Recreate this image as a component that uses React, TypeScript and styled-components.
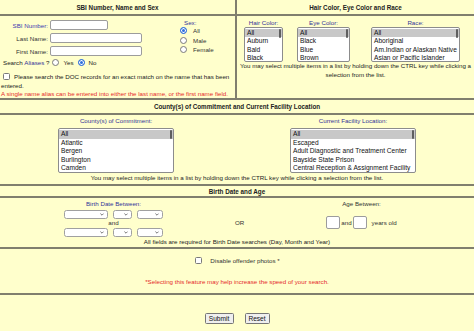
import React from 'react'
import styled, { createGlobalStyle } from 'styled-components'

const LINE = '#807f6e'
const NAVY = '#333399'

const GlobalStyle = createGlobalStyle`
  html, body {
    margin: 0;
    padding: 0;
    background: #ffffcc;
  }
  body {
    font-family: "Liberation Sans", Arial, sans-serif;
    font-size: 6.2px;
    color: #222;
  }
`

const Page = styled.div`
  width: 474px;
  height: 331px;
  overflow: hidden;
  background: #ffffcc;
`

const TopGrid = styled.div`
  display: grid;
  grid-template-columns: 237px 1fr;
  height: 100px;
  box-sizing: border-box;
  border-bottom: 2px solid ${LINE};
`

const LeftCol = styled.div`
  border-right: 2px solid ${LINE};
`

const RightCol = styled.div``

const CellHeader = styled.div`
  height: 16px;
  box-sizing: border-box;
  border-bottom: 2px solid ${LINE};
  display: flex;
  align-items: center;
  justify-content: center;
  font-weight: bold;
  font-size: 6.3px;
  color: #222;
`

const SectionHeader = styled.div<{ $h: number }>`
  height: ${(p) => p.$h}px;
  box-sizing: border-box;
  border-bottom: 2px solid ${LINE};
  display: flex;
  align-items: center;
  justify-content: center;
  font-weight: bold;
  font-size: 6.3px;
  color: #222;
`

const Section = styled.div<{ $h: number }>`
  height: ${(p) => p.$h}px;
  box-sizing: border-box;
  border-bottom: 2px solid ${LINE};
`

const NameArea = styled.div`
  display: flex;
  align-items: flex-start;
  padding-top: 3px;
`

const Fields = styled.div`
  width: 180px;
  padding-top: 1px;
`

const FieldRow = styled.div`
  display: flex;
  align-items: center;
  height: 10px;
  margin-bottom: 3px;
  &:last-child {
    margin-bottom: 0;
  }
`

const FieldLabel = styled.span<{ $blue?: boolean }>`
  width: 48px;
  margin-right: 2px;
  text-align: right;
  color: ${(p) => (p.$blue ? '#3a3ab0' : '#333')};
  white-space: nowrap;
`

const TextInput = styled.input<{ $w: number }>`
  width: ${(p) => p.$w}px;
  height: 10px;
  box-sizing: border-box;
  border: 1px solid #9c9c9c;
  border-radius: 2px;
  background: #fff;
  padding: 0;
  margin: 0;
  outline: none;
`

const SexCol = styled.div`
  display: flex;
  flex-direction: column;
`

const SexLabel = styled.div`
  height: 7px;
  line-height: 7px;
  margin-left: 4px;
  color: ${NAVY};
`

const RadioRow = styled.label`
  display: flex;
  align-items: center;
  height: 9.5px;
  color: #333;
`

const Radio = styled.span<{ $checked?: boolean }>`
  display: inline-block;
  width: 7px;
  height: 7px;
  box-sizing: border-box;
  border-radius: 50%;
  border: 1px solid ${(p) => (p.$checked ? '#2f6fdc' : '#7a7a7a')};
  background: ${(p) => (p.$checked ? '#2f6fdc' : '#fff')};
  box-shadow: ${(p) => (p.$checked ? 'inset 0 0 0 1px #fff' : 'none')};
  flex: none;
`

const RadioText = styled.span<{ $gap: number }>`
  margin-left: ${(p) => p.$gap}px;
  margin-right: 4px;
`

const AliasRow = styled.div`
  display: flex;
  align-items: center;
  height: 8px;
  margin-top: 2px;
  padding-left: 3px;
  color: #222;
`

const AliasWord = styled.span`
  color: ${NAVY};
`

const AliasChoices = styled.span`
  display: flex;
  align-items: center;
  margin-left: 3px;
`

const ExactPara = styled.div`
  margin-top: 7px;
  padding-left: 1px;
  line-height: 8.5px;
  color: #222;
`

const CheckBox = styled.span`
  display: inline-block;
  width: 7px;
  height: 7px;
  box-sizing: border-box;
  border: 1px solid #7a7a7a;
  border-radius: 1.5px;
  background: #fff;
  vertical-align: -1px;
  flex: none;
`

const InlineCheck = styled(CheckBox)`
  margin-left: 2px;
  margin-right: 4px;
`

const RedNote = styled.div<{ $center?: boolean }>`
  color: #e52b2b;
  line-height: 8.5px;
  padding-left: ${(p) => (p.$center ? 0 : 1)}px;
  text-align: ${(p) => (p.$center ? 'center' : 'left')};
  white-space: nowrap;
`

const ListGroup = styled.div`
  display: flex;
  align-items: flex-start;
  padding-top: 3px;
  padding-left: 7px;
`

const ListField = styled.div<{ $ml: number }>`
  display: flex;
  flex-direction: column;
  align-items: center;
  margin-left: ${(p) => p.$ml}px;
`

const ListLabel = styled.div`
  height: 7px;
  line-height: 7px;
  margin-bottom: 1px;
  color: ${NAVY};
  white-space: nowrap;
`

const ListBox = styled.div<{ $w: number; $h: number }>`
  position: relative;
  width: ${(p) => p.$w}px;
  height: ${(p) => p.$h}px;
  box-sizing: border-box;
  border: 1px solid #8c8c8c;
  border-radius: 2px;
  background: #fff;
  overflow: hidden;
  padding-top: 1px;
`

const Option = styled.div<{ $selected?: boolean; $h: number }>`
  height: ${(p) => p.$h}px;
  line-height: ${(p) => p.$h}px;
  padding-left: 2px;
  background: ${(p) => (p.$selected ? '#c8c8c8' : 'transparent')};
  white-space: nowrap;
  font-size: 6.6px;
  color: #111;
`

const Thumb = styled.span`
  position: absolute;
  right: 1px;
  top: 1px;
  width: 2.5px;
  height: 9px;
  border-radius: 1.5px;
  background: #5f5f5f;
`

const Note = styled.div`
  text-align: center;
  line-height: 8.5px;
  color: #222;
`

const CountyGrid = styled.div`
  display: grid;
  grid-template-columns: 232px 1fr;
  padding-top: 2px;
`

const CountyField = styled.div`
  display: flex;
  flex-direction: column;
  align-items: center;
`

const CountyLabel = styled.div`
  height: 8px;
  line-height: 8px;
  margin-bottom: 3px;
  color: ${NAVY};
`

const CountyNote = styled(Note)`
  margin-top: 1px;
  line-height: 8px;
`

const BirthGrid = styled.div`
  display: grid;
  grid-template-columns: 227px 22px 1fr;
  padding-top: 2px;
`

const BirthCol = styled.div`
  display: flex;
  flex-direction: column;
  align-items: center;
`

const SmallLabel = styled.div<{ $navy?: boolean }>`
  height: 8px;
  line-height: 8px;
  color: ${(p) => (p.$navy ? NAVY : '#333')};
`

const SelectRow = styled.div<{ $mt: number }>`
  display: flex;
  gap: 5px;
  margin-top: ${(p) => p.$mt}px;
`

const DateSelect = styled.div<{ $w: number }>`
  width: ${(p) => p.$w}px;
  height: 9px;
  box-sizing: border-box;
  border: 1px solid #a0a0a0;
  border-radius: 2.5px;
  background: #fff;
  display: flex;
  align-items: center;
  justify-content: flex-end;
  padding-right: 3px;
`

const AndText = styled.div`
  height: 8px;
  line-height: 8px;
  color: #333;
`

const OrCol = styled.div`
  padding-top: 19px;
  padding-left: 8px;
  line-height: 8px;
  color: #333;
`

const AgeRow = styled.div`
  display: flex;
  align-items: center;
  margin-top: 8px;
  color: #333;
`

const AgeInput = styled.input`
  width: 14px;
  height: 13px;
  box-sizing: border-box;
  border: 1px solid #9c9c9c;
  border-radius: 2px;
  background: #fff;
  padding: 0;
  margin: 0;
`

const AgeWord = styled.span<{ $l: number; $r: number }>`
  margin-left: ${(p) => p.$l}px;
  margin-right: ${(p) => p.$r}px;
`

const BirthNote = styled(Note)`
  margin-top: 1px;
  line-height: 8px;
`

const PhotoRow = styled.div`
  display: flex;
  align-items: center;
  justify-content: center;
  height: 8px;
  margin-top: 7px;
  padding-left: 1px;
  color: #333;
`

const PhotoText = styled.span`
  margin-left: 8px;
`

const PhotoNote = styled(RedNote)`
  margin-top: 14px;
  line-height: 8px;
`

const ButtonRow = styled.div`
  display: flex;
  justify-content: center;
  gap: 11px;
  padding-top: 18px;
`

const FormButton = styled.button<{ $w: number }>`
  width: ${(p) => p.$w}px;
  height: 11px;
  box-sizing: border-box;
  padding: 0;
  margin: 0;
  font-family: "Liberation Sans", Arial, sans-serif;
  font-size: 6.6px;
  color: #111;
  background: #efefef;
  border: 1px solid #767676;
  border-radius: 1.5px;
`

function Chevron() {
  return (
    <svg width="4" height="3" viewBox="0 0 4 3">
      <path d="M0.4 0.6 L2 2.2 L3.6 0.6" fill="none" stroke="#555" strokeWidth="0.8" />
    </svg>
  )
}

type ListProps = {
  items: string[]
  w: number
  h: number
  rowH: number
}

function List(props: ListProps) {
  return (
    <ListBox $w={props.w} $h={props.h}>
      {props.items.map((item, i) => (
        <Option key={item} $selected={i === 0} $h={props.rowH}>
          {item}
        </Option>
      ))}
      <Thumb />
    </ListBox>
  )
}

function DateSelects({ mt }: { mt: number }) {
  return (
    <SelectRow $mt={mt}>
      <DateSelect $w={44}><Chevron /></DateSelect>
      <DateSelect $w={19}><Chevron /></DateSelect>
      <DateSelect $w={26}><Chevron /></DateSelect>
    </SelectRow>
  )
}

export default function App() {
  return (
    <Page>
      <GlobalStyle />
      <TopGrid>
        <LeftCol>
          <CellHeader>SBI Number, Name and Sex</CellHeader>
          <NameArea>
            <Fields>
              <FieldRow>
                <FieldLabel $blue>SBI Number:</FieldLabel>
                <TextInput $w={58} />
              </FieldRow>
              <FieldRow>
                <FieldLabel>Last Name:</FieldLabel>
                <TextInput $w={92} />
              </FieldRow>
              <FieldRow>
                <FieldLabel>First Name:</FieldLabel>
                <TextInput $w={92} />
              </FieldRow>
            </Fields>
            <SexCol>
              <SexLabel>Sex:</SexLabel>
              <RadioRow>
                <Radio $checked />
                <RadioText $gap={6}>All</RadioText>
              </RadioRow>
              <RadioRow>
                <Radio />
                <RadioText $gap={6}>Male</RadioText>
              </RadioRow>
              <RadioRow>
                <Radio />
                <RadioText $gap={6}>Female</RadioText>
              </RadioRow>
            </SexCol>
          </NameArea>
          <AliasRow>
            Search&nbsp;<AliasWord>Aliases</AliasWord>&nbsp;?
            <AliasChoices>
              <Radio />
              <RadioText $gap={4}>Yes</RadioText>
              <Radio $checked />
              <RadioText $gap={4}>No</RadioText>
            </AliasChoices>
          </AliasRow>
          <ExactPara>
            <InlineCheck />
            Please search the DOC records for an exact match on the name that has been entered.
          </ExactPara>
          <RedNote>A single name alias can be entered into either the last name, or the first name field.</RedNote>
        </LeftCol>
        <RightCol>
          <CellHeader>Hair Color, Eye Color and Race</CellHeader>
          <ListGroup>
            <ListField $ml={0}>
              <ListLabel>Hair Color:</ListLabel>
              <List items={['All', 'Auburn', 'Bald', 'Black']} w={39} h={35} rowH={8.4} />
            </ListField>
            <ListField $ml={14}>
              <ListLabel>Eye Color:</ListLabel>
              <List items={['All', 'Black', 'Blue', 'Brown']} w={53} h={35} rowH={8.4} />
            </ListField>
            <ListField $ml={21}>
              <ListLabel>Race:</ListLabel>
              <List
                items={['All', 'Aboriginal', 'Am.Indian or Alaskan Native', 'Asian or Pacific Islander']}
                w={89}
                h={35}
                rowH={8.4}
              />
            </ListField>
          </ListGroup>
          <Note>
            You may select multiple items in a list by holding down the CTRL key while clicking a
            <br />
            selection from the list.
          </Note>
        </RightCol>
      </TopGrid>

      <Section $h={86}>
        <SectionHeader $h={15}>County(s) of Commitment and Current Facility Location</SectionHeader>
        <CountyGrid>
          <CountyField>
            <CountyLabel>County(s) of Commitment:</CountyLabel>
            <List items={['All', 'Atlantic', 'Bergen', 'Burlington', 'Camden']} w={116} h={45} rowH={8.6} />
          </CountyField>
          <CountyField>
            <CountyLabel>Current Facility Location:</CountyLabel>
            <List
              items={[
                'All',
                'Escaped',
                'Adult Diagnostic and Treatment Center',
                'Bayside State Prison',
                'Central Reception & Assignment Facility',
              ]}
              w={126}
              h={45}
              rowH={8.6}
            />
          </CountyField>
        </CountyGrid>
        <CountyNote>
          You may select multiple items in a list by holding down the CTRL key while clicking a selection from the list.
        </CountyNote>
      </Section>

      <Section $h={63}>
        <SectionHeader $h={12}>Birth Date and Age</SectionHeader>
        <BirthGrid>
          <BirthCol>
            <SmallLabel $navy>Birth Date Between:</SmallLabel>
            <DateSelects mt={2} />
            <AndText>and</AndText>
            <DateSelects mt={1} />
          </BirthCol>
          <OrCol>OR</OrCol>
          <BirthCol>
            <SmallLabel>Age Between:</SmallLabel>
            <AgeRow>
              <AgeInput />
              <AgeWord $l={1} $r={1}>and</AgeWord>
              <AgeInput />
              <AgeWord $l={5} $r={0}>years old</AgeWord>
            </AgeRow>
          </BirthCol>
        </BirthGrid>
        <BirthNote>All fields are required for Birth Date searches (Day, Month and Year)</BirthNote>
      </Section>

      <Section $h={39}>
        <PhotoRow>
          <CheckBox />
          <PhotoText>Disable offender photos *</PhotoText>
        </PhotoRow>
        <PhotoNote $center>*Selecting this feature may help increase the speed of your search.</PhotoNote>
      </Section>

      <ButtonRow>
        <FormButton $w={29}>Submit</FormButton>
        <FormButton $w={25}>Reset</FormButton>
      </ButtonRow>
    </Page>
  )
}
